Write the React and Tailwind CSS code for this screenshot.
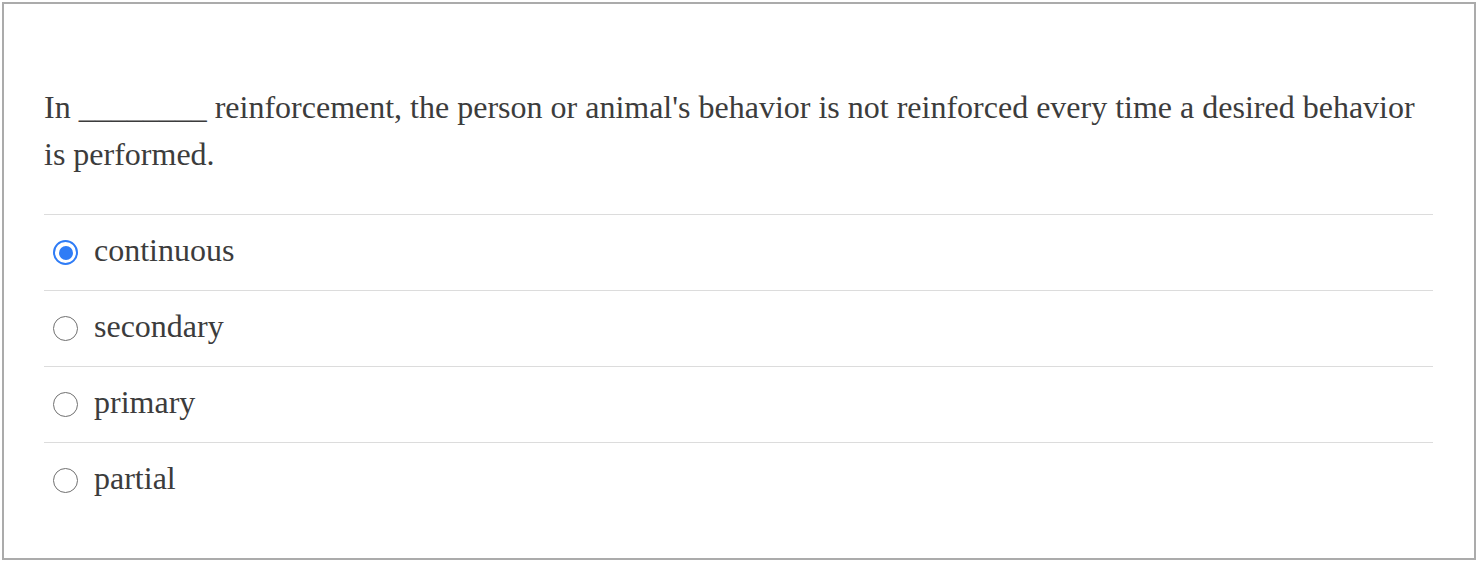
import React, { useState } from 'react';

const options = ['continuous', 'secondary', 'primary', 'partial'];

const Radio = ({ checked }) => (
    <span
        className={
            checked
                ? 'flex items-center justify-center w-[25px] h-[25px] rounded-full border-[2.5px] border-[#2f7cf6] bg-white'
                : 'flex items-center justify-center w-[25px] h-[25px] rounded-full border-[1.5px] border-[#707070] bg-white'
        }
    >
        {checked && <span className="w-[14px] h-[14px] rounded-full bg-[#2f7cf6]" />}
    </span>
);

export default function App() {
    const [selected, setSelected] = useState(0);

    return (
        <div className="w-[1478px] h-[570px] bg-white p-[2px]">
            <div
                className="w-[1474px] h-[558px] border-2 border-[#ababab] pt-[80px] pl-[40px] pr-[41px] text-[#3c3c3c]"
                style={{ fontFamily: '"Liberation Serif", "Times New Roman", serif' }}
            >
                <p className="text-[32px] leading-[47px] pr-[10px]">
                    In ________ reinforcement, the person or animal's behavior is not reinforced every time a desired behavior is performed.
                </p>

                <div className="mt-[36px]">
                    {options.map((opt, i) => (
                        <label
                            key={opt}
                            onClick={() => setSelected(i)}
                            className="flex items-center h-[76px] border-t border-[#dcdcdc] pl-[9px] cursor-pointer"
                        >
                            <Radio checked={selected === i} />
                            <span className="ml-[16px] text-[32px] leading-none pb-[6px]">{opt}</span>
                        </label>
                    ))}
                </div>
            </div>
        </div>
    );
}
